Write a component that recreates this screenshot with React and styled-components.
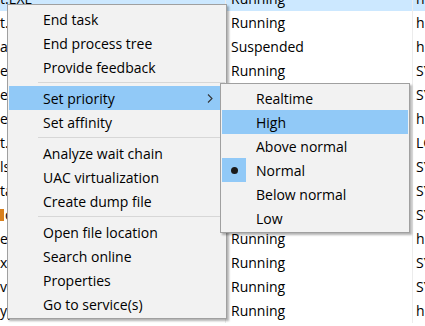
import React from 'react';
import styled, { createGlobalStyle } from 'styled-components';

const Global = createGlobalStyle`
  html, body { margin: 0; padding: 0; background: #fff; overflow: hidden; }
  body { width: 425px; height: 326px; font-family: "Open Sans", "Noto Sans", sans-serif; }
`;

const Page = styled.div`
  position: relative;
  width: 425px;
  height: 326px;
  overflow: hidden;
  background: #fff;
  font-size: 14px;
  color: #000;
`;

const Table = styled.div`
  margin-top: -13px;
  display: grid;
  grid-template-columns: 226px 187px 1fr;
`;

const Cell = styled.div`
  height: 24px;
  line-height: 24px;
  white-space: nowrap;
  overflow: hidden;
  background: ${p => (p.$selected ? '#cce8ff' : '#fff')};
  border-right: ${p => (p.$divider ? '1px solid #ececec' : 'none')};
  padding-left: ${p => p.$pad || 0}px;
  display: flex;
  align-items: center;
`;

const AppIcon = styled.span`
  display: inline-block;
  width: 4px;
  height: 12px;
  background: #d9801c;
  margin-right: 1px;
`;

const Menu = styled.div`
  position: absolute;
  left: ${p => p.$left}px;
  top: ${p => p.$top}px;
  width: ${p => p.$width}px;
  box-sizing: border-box;
  background: #f2f2f2;
  border: 1px solid #a0a0a0;
  padding: 2px 1px;
  box-shadow: 2px 2px 2px rgba(0, 0, 0, 0.3);
  display: flex;
  flex-direction: column;
`;

const Item = styled.div`
  position: relative;
  height: 24px;
  display: flex;
  align-items: center;
  padding-left: 34px;
  background: ${p => (p.$hot ? '#91c9f7' : 'transparent')};
  white-space: nowrap;
`;

const Separator = styled.div`
  height: 7px;
  display: flex;
  align-items: center;
  padding-left: 29px;
  &::after {
    content: '';
    flex: 1;
    height: 1px;
    background: #d7d7d7;
  }
`;

const Chevron = styled.svg`
  position: absolute;
  right: 12px;
  top: 8px;
`;

const CheckBox = styled.span`
  position: absolute;
  left: 0;
  top: 0;
  width: 24px;
  height: 24px;
  background: #91c9f7;
  display: flex;
  align-items: center;
  justify-content: center;
  &::after {
    content: '';
    width: 7px;
    height: 7px;
    border-radius: 50%;
    background: #1a1a1a;
  }
`;

const rows = [
  { name: 't.EXE', status: 'Running', user: 'hlee', selected: true },
  { name: 't.exe', status: 'Running', user: 'hlee' },
  { name: 'a.exe', status: 'Suspended', user: 'hlee' },
  { name: 'exe', status: 'Running', user: 'SYSTEM' },
  { name: 'exe', status: 'Running', user: 'SYSTEM' },
  { name: 'exe', status: 'Running', user: 'hlee' },
  { name: 't.exe', status: 'Running', user: 'LOCAL SERVICE' },
  { name: 'lsass.exe', status: 'Running', user: 'SYSTEM' },
  { name: 'taskhostw.exe', status: 'Running', user: 'SYSTEM' },
  { name: 'csrss.exe', status: 'Running', user: 'SYSTEM', icon: true },
  { name: 'exe', status: 'Running', user: 'hlee' },
  { name: 'x.exe', status: 'Running', user: 'SYSTEM' },
  { name: 'vm.exe', status: 'Running', user: 'SYSTEM' },
  { name: 'ypl.exe', status: 'Running', user: 'hlee' },
];

const mainItems = [
  'End task', 'End process tree', 'Provide feedback', '-',
  'Set priority', 'Set affinity', '-',
  'Analyze wait chain', 'UAC virtualization', 'Create dump file', '-',
  'Open file location', 'Search online', 'Properties', 'Go to service(s)',
];

const priorities = ['Realtime', 'High', 'Above normal', 'Normal', 'Below normal', 'Low'];

export default function App() {
  return (
    <Page>
      <Global />
      <Table>
        {rows.map((r, i) => (
          <React.Fragment key={i}>
            <Cell $selected={r.selected} $divider>
              {r.icon && <AppIcon />}
              {r.name}
            </Cell>
            <Cell $selected={r.selected} $divider $pad={5}>{r.status}</Cell>
            <Cell $selected={r.selected} $pad={3}>{r.user}</Cell>
          </React.Fragment>
        ))}
      </Table>

      <Menu $left={7} $top={4} $width={220}>
        {mainItems.map((t, i) =>
          t === '-' ? (
            <Separator key={i} />
          ) : (
            <Item key={i} $hot={t === 'Set priority'}>
              {t}
              {t === 'Set priority' && (
                <Chevron width="6" height="9" viewBox="0 0 6 9">
                  <path d="M1 0.5 L5 4.5 L1 8.5" fill="none" stroke="#333" strokeWidth="1.1" />
                </Chevron>
              )}
            </Item>
          )
        )}
      </Menu>

      <Menu $left={220} $top={83} $width={190}>
        {priorities.map(p => (
          <Item key={p} $hot={p === 'High'}>
            {p === 'Normal' && <CheckBox />}
            {p}
          </Item>
        ))}
      </Menu>
    </Page>
  );
}
